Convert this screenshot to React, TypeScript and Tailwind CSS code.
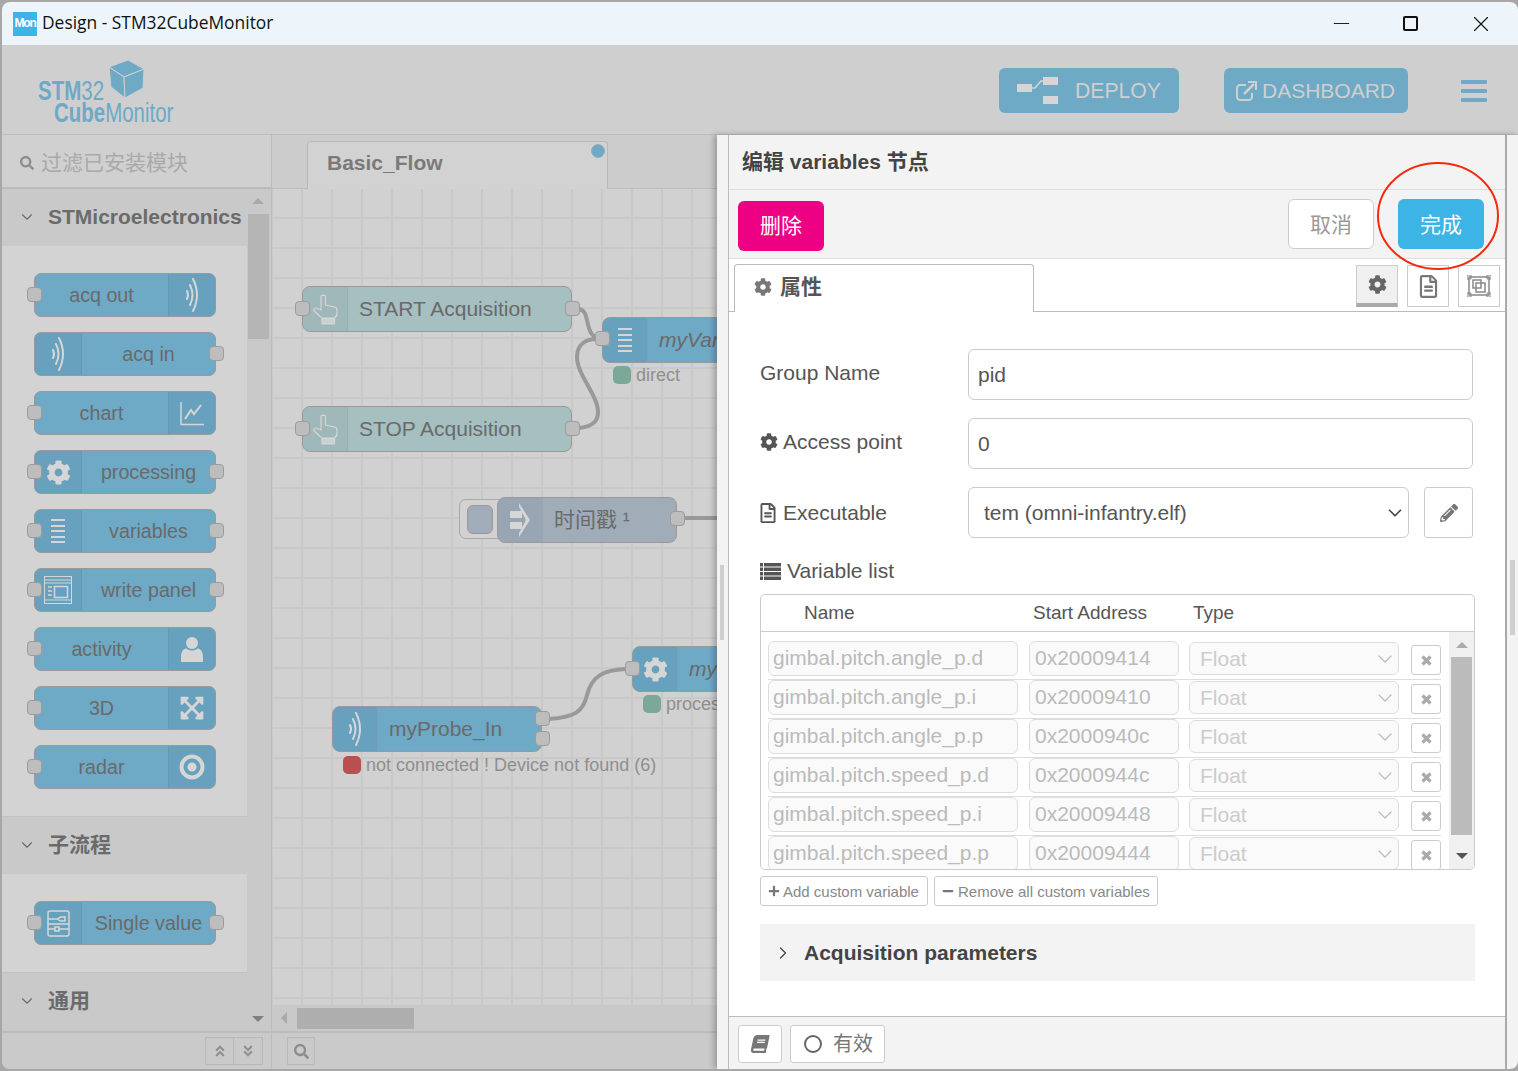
import type { ReactNode } from "react";
import {
  FaCog,
  FaExpandArrowsAlt,
  FaPencilAlt,
  FaPlus,
  FaMinus,
  FaSearch,
  FaBook,
  FaAngleDoubleUp,
  FaAngleDoubleDown,
  FaRegFileAlt,
} from "react-icons/fa";
import { ChevronDown, ChevronRight, Minus, X } from "lucide-react";

const iconCls = "text-[#d6d6d6]";

function WaveIcon() {
  return (
    <svg width="14" height="34" viewBox="0 0 14 34" fill="none" stroke="#d6d6d6" strokeWidth="2" strokeLinecap="round">
      <path d="M2 13 Q4 17 2 21" />
      <path d="M5 7 Q10 17 5 27" />
      <path d="M8 1 Q16 17 8 33" />
    </svg>
  );
}

function LinesIcon() {
  return (
    <svg width="16" height="26" viewBox="0 0 16 26" stroke="#d6d6d6" strokeWidth="2">
      <path d="M1 2H15M1 8H15M1 13H15M1 19H15M1 24H15" />
    </svg>
  );
}

function ChartIcon() {
  return (
    <svg width="26" height="25" viewBox="0 0 26 25" fill="none" stroke="#d6d6d6" strokeWidth="1.5">
      <path d="M2 1V23.5H25" />
      <path d="M6 18 L12 9 L15 13 L22 4" strokeWidth="2" />
    </svg>
  );
}

function PanelIcon() {
  return (
    <svg width="28" height="28" viewBox="0 0 28 28" fill="none" stroke="#d6d6d6" strokeWidth="1">
      <rect x="0.5" y="0.5" width="27" height="27" />
      <path d="M1 4H27M1 7H27M1 24H27" />
      <rect x="10.5" y="10.5" width="13" height="11" strokeWidth="1.5" />
      <path d="M4 11H8M4 15H8M4 19H8" strokeWidth="1.5" />
    </svg>
  );
}

function UserIcon() {
  return (
    <svg width="22" height="25" viewBox="0 0 22 25" fill="#d6d6d6">
      <circle cx="11" cy="6" r="6" />
      <path d="M0 25 V20 C0 14 3 11.5 5.5 11.5 C7 13 9 13.5 11 13.5 C13 13.5 15 13 16.5 11.5 C19 11.5 22 14 22 20 V25 Z" />
    </svg>
  );
}

function RadarIcon() {
  return (
    <svg width="26" height="26" viewBox="0 0 26 26">
      <circle cx="13" cy="13" r="10.5" fill="none" stroke="#d6d6d6" strokeWidth="4" />
      <circle cx="13" cy="13" r="4.5" fill="#d6d6d6" />
    </svg>
  );
}

function SubflowIcon() {
  return (
    <svg width="23" height="27" viewBox="0 0 23 27" fill="none" stroke="#d6d6d6" strokeWidth="1.5">
      <rect x="1" y="1" width="21" height="25" rx="2" />
      <path d="M1 9H10C12 9 12 7 14 7H18V11H14C12 11 12 9 10 9M1 14H22M1 19H8V17H12V21H8V19M12 19H22" />
    </svg>
  );
}

function HandIcon() {
  return (
    <svg width="25" height="31" viewBox="0 0 25 31" fill="none" stroke="#d6d6d6" strokeWidth="1.2" strokeLinejoin="round">
      <path d="M8 16 V3 C8 0.5 12.5 0.5 12.5 3 V11 L21.5 13 C23.5 13.5 24 14.5 24 16 V21 L21.5 24 H9 L1.5 17.5 C0 15.5 2 13 4.5 14.5 Z" />
      <path d="M9 24.5 H21.5 V30 H9 Z" fill="#d6d6d6" fillOpacity="0.8" />
    </svg>
  );
}

function TimestampIcon() {
  return (
    <svg width="20" height="36" viewBox="0 0 20 36" fill="#d6d6d6">
      <rect x="0" y="9" width="12" height="7" />
      <rect x="0" y="20" width="12" height="7" />
      <path d="M9 1 L20 18 L9 35 V31 L16 18 L9 5 Z" />
    </svg>
  );
}

function Port({ side, className = "" }: { side: "l" | "r"; className?: string }) {
  return (
    <span
      className={`absolute w-[15px] h-[15px] rounded-[4px] bg-[#bdbdbd] border border-[#9c9c9c] z-10 ${
        side === "l" ? "-left-[7px]" : "-right-[8px]"
      } ${className}`}
    />
  );
}

function PaletteNode({
  label,
  icon,
  iconRight,
  left,
  right,
}: {
  label: string;
  icon: ReactNode;
  iconRight?: boolean;
  left?: boolean;
  right?: boolean;
}) {
  const box = (
    <span
      className={`w-[47px] shrink-0 h-full flex items-center justify-center bg-[#68a1bd] border-[#639ab5] ${
        iconRight ? "border-l" : "border-r"
      }`}
    >
      {icon}
    </span>
  );
  return (
    <div className="relative w-[182px] h-[44px] ml-[32px]">
      <div className="w-full h-full rounded-[7px] border border-[#999] bg-[#6ea9c6] overflow-hidden flex items-center text-[19.7px] text-[#6a6a6a]">
        {!iconRight && box}
        <span className="flex-1 text-center leading-none whitespace-nowrap pt-[2px]">{label}</span>
        {iconRight && box}
      </div>
      {left && <Port side="l" className="top-[14px]" />}
      {right && <Port side="r" className="top-[14px]" />}
    </div>
  );
}

function SectionHeader({ title, height }: { title: string; height: string }) {
  return (
    <div className={`${height} shrink-0 flex items-center bg-[#c9c9c9] pl-[16px] pb-[2px] gap-[12px] text-[#6b6b6b] font-bold text-[21px]`}>
      <ChevronDown size={18} strokeWidth={1.5} />
      <span>{title}</span>
    </div>
  );
}

function CanvasNode({
  className,
  width,
  label,
  icon,
  color,
  iconColor,
  italic,
  ports,
}: {
  className: string;
  width: string;
  label: string;
  icon: ReactNode;
  color: string;
  iconColor: string;
  italic?: boolean;
  ports?: ReactNode;
}) {
  return (
    <div className={`absolute ${width} h-[46px] ${className}`}>
      <div className={`w-full h-full rounded-[8px] border border-[#999] ${color} overflow-hidden flex items-center text-[21px] text-[#6a6a6a]`}>
        <span className={`w-[45px] shrink-0 h-full flex items-center justify-center border-r border-[#93a9ab]/40 ${iconColor}`}>{icon}</span>
        <span className={`pl-[11px] whitespace-nowrap ${italic ? "italic" : ""}`}>{label}</span>
      </div>
      {ports}
    </div>
  );
}

function Status({ className, color, text }: { className: string; color: string; text: string }) {
  return (
    <div className={`absolute flex items-center gap-[5px] text-[18px] leading-none text-[#8f8f8f] whitespace-nowrap ${className}`}>
      <span className={`w-[18px] h-[18px] rounded-[5px] ${color}`} />
      {text}
    </div>
  );
}

const rows = [
  ["gimbal.pitch.angle_p.d", "0x20009414"],
  ["gimbal.pitch.angle_p.i", "0x20009410"],
  ["gimbal.pitch.angle_p.p", "0x2000940c"],
  ["gimbal.pitch.speed_p.d", "0x2000944c"],
  ["gimbal.pitch.speed_p.i", "0x20009448"],
  ["gimbal.pitch.speed_p.p", "0x20009444"],
];

function VarRow({ name, addr }: { name: string; addr: string }) {
  const field = "h-[35px] rounded-[6px] border border-[#ddd] bg-[#fafafa] text-[21px] text-[#bbb] flex items-center pb-[2px] shrink-0";
  return (
    <div className="h-[39px] shrink-0 border-b border-[#ddd] flex items-start mr-[8px]">
      <div className={`${field} w-[250px] pl-[4px]`}>{name}</div>
      <div className={`${field} w-[150px] ml-[11px] pl-[5px]`}>{addr}</div>
      <div className="h-[33px] mt-[1px] w-[210px] ml-[10px] rounded-[6px] border border-[#ddd] bg-[#fafafa] text-[21px] text-[#ccc] flex items-center justify-between pl-[10px] pr-[1px] shrink-0">
        Float
        <ChevronDown size={24} strokeWidth={1.2} className="text-[#bbb]" />
      </div>
      <div className="w-[30px] h-[30px] mt-[4px] ml-[12px] rounded-[3px] border border-[#ccc] bg-white flex items-center justify-center shrink-0">
        <svg width="11" height="11" viewBox="0 0 11 11" stroke="#aaa" strokeWidth="3.2">
          <path d="M1.5 1.5L9.5 9.5M9.5 1.5L1.5 9.5" />
        </svg>
      </div>
    </div>
  );
}

export default function App() {
  return (
    <div className="w-[1518px] h-[1071px] bg-[#a7a7a7] pt-[2px] pl-[2px] pb-[2px] overflow-hidden font-['Liberation_Sans','Noto_Sans_CJK_SC',sans-serif]">
      <div className="w-full h-full rounded-t-[8px] rounded-b-[8px] overflow-hidden flex flex-col relative">
        {/* Title bar */}
        <div className="h-[43px] shrink-0 bg-[#eef5fa] flex items-center pl-[11px] pr-[2px]">
          <span className="w-[24px] h-[24px] bg-[#3cb4e6] text-white font-bold text-[12px] leading-[22px] text-center tracking-[-1.2px] overflow-hidden">Mon</span>
          <span className="ml-[5px] pb-[2px] text-[17.4px] text-[#111] font-['Open_Sans',sans-serif]">Design - STM32CubeMonitor</span>
          <div className="ml-auto flex items-center text-[#111]">
            <span className="w-[70px] flex justify-center"><Minus size={25} strokeWidth={0.9} /></span>
            <span className="w-[70px] flex justify-center pr-[2px]"><span className="w-[15px] h-[15px] border-2 border-[#111] rounded-[2px]" /></span>
            <span className="w-[70px] flex justify-center"><X size={26} strokeWidth={1} /></span>
          </div>
        </div>

        {/* Header */}
        <div className="h-[90px] shrink-0 bg-[#cfcfcf] flex items-center pt-[2px] pr-[31px] border-b border-[#bdbdbd]">
          <div className="ml-[36px] mt-[0.5px] w-[140px] text-[#6ea9c6]">
            <div className="flex items-end h-[40px]">
              <span className="inline-block origin-left scale-x-[0.76] text-[27px] leading-[20px] w-[71px] whitespace-nowrap -mb-[2.5px]"><b>STM</b>32</span>
              <svg width="36" height="39" viewBox="0 0 36 39" fill="#6ea9c6" stroke="#cfcfcf" strokeWidth="1">
                <path d="M19 0L0 7L15 17L35 9Z" />
                <path d="M0 7L2 27L16 38L15 17Z" />
                <path d="M15 17L16 38L34 28L35 9Z" />
              </svg>
            </div>
            <div className="pl-[16px] mt-[4.5px] h-[20px] leading-[20px] whitespace-nowrap">
              <span className="inline-block origin-left scale-x-[0.758] text-[27px] leading-[20px]"><b>Cube</b>Monitor</span>
            </div>
          </div>
          <div className="ml-auto w-[180px] h-[45px] rounded-[6px] bg-[#6ea9c6] flex items-center pl-[18px] text-[21.2px] text-[#cfcfcf]">
            <svg width="42" height="28" viewBox="0 0 42 28" fill="#d6d6d6">
              <rect x="0" y="7" width="15" height="8" />
              <rect x="26" y="0" width="15" height="8" />
              <rect x="26" y="19" width="15" height="8" />
              <path d="M15 11 H18 L24 4 H26" fill="none" stroke="#d6d6d6" strokeWidth="1.5" />
            </svg>
            <span className="ml-[16px]">DEPLOY</span>
          </div>
          <div className="ml-[45px] w-[184px] h-[45px] rounded-[6px] bg-[#6ea9c6] flex items-center pl-[12px] gap-[5px] text-[21px] text-[#cfcfcf]">
            <svg width="21" height="20" viewBox="0 0 21 20" fill="none" stroke="#cfcfcf" strokeWidth="2">
              <path d="M10 4H4C2.5 4 1 5.5 1 7V16C1 17.5 2.5 19 4 19H13C14.5 19 16 17.5 16 16V12" />
              <path d="M8 13L18 3" strokeWidth="2.5" />
              <path d="M12 1H20V9" />
            </svg>
            <span>DASHBOARD</span>
          </div>
          <div className="ml-[53px] w-[26px] flex flex-col gap-[5px]">
            <span className="h-[4px] rounded-[1px] bg-[#6ea9c6]" />
            <span className="h-[4px] rounded-[1px] bg-[#6ea9c6]" />
            <span className="h-[4px] rounded-[1px] bg-[#6ea9c6]" />
          </div>
        </div>

        {/* Main */}
        <div className="flex-1 flex min-h-0">
          {/* Palette */}
          <div className="w-[270px] shrink-0 flex flex-col border-r border-[#bcbcbc] bg-[#d0d0d0]">
            <div className="h-[54px] shrink-0 border-b-2 border-[#bcbcbc] flex items-center pl-[18px] pt-[3px] gap-[7px] text-[21px] text-[#a9a9a9]">
              <FaSearch size={14} className="text-[#8d8d8d]" />
              <span>过滤已安装模块</span>
            </div>
            <div className="flex-1 flex min-h-0">
              <div className="w-[245px] shrink-0 flex flex-col">
                <SectionHeader title="STMicroelectronics" height="h-[57px]" />
                <div className="h-[571px] shrink-0 bg-[#d3d3d3] pt-[27px] flex flex-col gap-[15px] border-b border-[#c2c2c2]">
                  <PaletteNode label="acq out" left iconRight icon={<WaveIcon />} />
                  <PaletteNode label="acq in" right icon={<WaveIcon />} />
                  <PaletteNode label="chart" left iconRight icon={<ChartIcon />} />
                  <PaletteNode label="processing" left right icon={<FaCog size={25} className={iconCls} />} />
                  <PaletteNode label="variables" left right icon={<LinesIcon />} />
                  <PaletteNode label="write panel" left right icon={<PanelIcon />} />
                  <PaletteNode label="activity" left iconRight icon={<UserIcon />} />
                  <PaletteNode label="3D" left iconRight icon={<FaExpandArrowsAlt size={26} className={iconCls} />} />
                  <PaletteNode label="radar" left iconRight icon={<RadarIcon />} />
                </div>
                <SectionHeader title="子流程" height="h-[57px]" />
                <div className="h-[99px] shrink-0 bg-[#d3d3d3] pt-[27px] border-b border-[#c2c2c2]">
                  <PaletteNode label="Single value" left right icon={<SubflowIcon />} />
                </div>
                <SectionHeader title="通用" height="h-[58px]" />
              </div>
              <div className="flex-1 bg-[#c9c9c9] flex flex-col items-center pt-[9px] pr-[2px]">
                <span className="w-0 h-0 border-x-[6px] border-x-transparent border-b-[6px] border-b-[#aaa]" />
                <span className="w-[21px] h-[125px] mt-[10px] bg-[#b4b4b4]" />
                <span className="w-0 h-0 mt-auto mb-[9px] border-x-[6px] border-x-transparent border-t-[6px] border-t-[#808080]" />
              </div>
            </div>
            <div className="h-[38px] shrink-0 border-t-2 border-[#bcbcbc] flex justify-end items-start pt-[4px] pr-[8px] bg-[#cacaca]">
              <span className="w-[29px] h-[28px] border border-[#b8b8b8] flex items-center justify-center"><FaAngleDoubleUp size={14} className="text-[#8f8f8f]" /></span>
              <span className="w-[29px] h-[28px] border border-l-0 border-[#b8b8b8] flex items-center justify-center"><FaAngleDoubleDown size={14} className="text-[#8f8f8f]" /></span>
            </div>
          </div>

          {/* Workspace */}
          <div className="w-[445px] shrink-0 flex flex-col min-w-0">
            <div className="h-[54px] shrink-0 bg-[#cccccc] border-b border-[#bcbcbc] pl-[35px] pt-[6px]">
              <div className="relative w-[301px] h-[48px] bg-[#d2d2d2] border border-b-0 border-[#b8b8b8] rounded-t-[4px] flex items-center pl-[19px] pb-[6px] text-[21px] font-bold text-[#7a7a7a]">
                Basic_Flow
                <span className="absolute right-[2px] top-[2px] w-[14px] h-[14px] rounded-full bg-[#6ea9c6] border border-[#9ab]" />
              </div>
            </div>
            <div className="relative h-[816px] shrink-0 overflow-hidden bg-[#d1d1d1] bg-[linear-gradient(#c9c9c9_2px,transparent_2px),linear-gradient(90deg,#c9c9c9_2px,transparent_2px)] bg-[size:30px_30px] bg-[position:-1px_-2px]">
              <svg className="absolute inset-0" width="445" height="816" viewBox="272 189 445 816" fill="none" stroke="#999" strokeWidth="4">
                <path d="M578 309 C592 309 582 335 600 339" />
                <path d="M580 428 C592 426 598 422 598 412 C598 395 577 375 577 357 C577 345 585 339 597 339" />
                <path d="M549 719 C575 717 583 712 587 695 C592 675 605 670 625 669" />
                <path d="M684 518 H717" />
              </svg>

              <CanvasNode
                className="left-[30px] top-[97px]"
                width="w-[270px]"
                label="START Acquisition"
                color="bg-[#a6bfc1]"
                iconColor="bg-[#9fb8ba]"
                icon={<HandIcon />}
                ports={<><Port side="l" className="top-[15px]" /><Port side="r" className="top-[15px]" /></>}
              />
              <CanvasNode
                className="left-[30px] top-[217px]"
                width="w-[270px]"
                label="STOP Acquisition"
                color="bg-[#a6bfc1]"
                iconColor="bg-[#9fb8ba]"
                icon={<HandIcon />}
                ports={<><Port side="l" className="top-[15px]" /><Port side="r" className="top-[15px]" /></>}
              />
              <CanvasNode
                className="left-[330px] top-[128px]"
                width="w-[200px]"
                label="myVariables"
                italic
                color="bg-[#6ea9c6]"
                iconColor="bg-[#68a1bd]"
                icon={<LinesIcon />}
                ports={<Port side="l" className="top-[14px]" />}
              />
              <Status className="left-[341px] top-[177px]" color="bg-[#7ba897]" text="direct" />

              <div className="absolute left-[187px] top-[310px] w-[50px] h-[40px] rounded-[7px] border border-[#a9a9a9] bg-[#d2d2d2] pl-[7px] pt-[5px]">
                <div className="w-[26px] h-[29px] rounded-[6px] border border-[#999] bg-[#a0adb9]" />
              </div>
              <CanvasNode
                className="left-[225px] top-[308px]"
                width="w-[180px]"
                label="时间戳 ¹"
                color="bg-[#a0adb9]"
                iconColor="bg-[#98a5b3]"
                icon={<TimestampIcon />}
                ports={<Port side="r" className="top-[14px]" />}
              />

              <CanvasNode
                className="left-[360px] top-[457px]"
                width="w-[200px]"
                label="myProcessing"
                italic
                color="bg-[#6ea9c6]"
                iconColor="bg-[#68a1bd]"
                icon={<FaCog size={25} className={iconCls} />}
                ports={<Port side="l" className="top-[15px]" />}
              />
              <Status className="left-[371px] top-[506px]" color="bg-[#7ba897]" text="processing" />

              <CanvasNode
                className="left-[60px] top-[517px]"
                width="w-[210px]"
                label="myProbe_In"
                color="bg-[#6ea9c6]"
                iconColor="bg-[#68a1bd]"
                icon={<WaveIcon />}
                ports={<><Port side="r" className="top-[5px]" /><Port side="r" className="top-[25px]" /></>}
              />
              <Status className="left-[71px] top-[567px]" color="bg-[#b85050]" text="not connected ! Device not found (6)" />
            </div>
            <div className="h-[26px] shrink-0 bg-[#c9c9c9] flex items-center pl-[9px]">
              <span className="w-0 h-0 border-y-[6px] border-y-transparent border-r-[6px] border-r-[#aaa]" />
              <span className="ml-[10px] w-[117px] h-[21px] bg-[#aeaeae]" />
            </div>
            <div className="flex-1 border-t-2 border-[#bcbcbc] bg-[#cacaca] pl-[15px] pt-[4px]">
              <span className="w-[28px] h-[28px] border border-[#b8b8b8] flex items-center justify-center"><FaSearch size={15} className="text-[#8d8d8d]" /></span>
            </div>
          </div>

          {/* Edit tray */}
          <div className="flex-1 flex min-w-0 relative z-10 shadow-[-3px_0_6px_rgba(0,0,0,0.25)] bg-[#f3f3f3]">
            <div className="w-[12px] shrink-0 border-r border-[#bbb] pl-[3px] pt-[430px]">
              <div className="w-[4px] h-[75px] bg-[#cfcfcf]" />
            </div>
            <div className="w-[778px] shrink-0 flex flex-col bg-white border-r-2 border-[#aaa] relative">
              <div className="h-[55px] shrink-0 bg-[#f3f3f3] border-b border-[#ddd] flex items-center pl-[13px] text-[21px] font-bold text-[#444]">编辑 variables 节点</div>
              <div className="h-[69px] shrink-0 bg-[#f3f3f3] border-b border-[#ddd] flex items-start pl-[9px] pr-[21px] text-[21px]">
                <div className="w-[86px] h-[50px] mt-[11px] rounded-[6px] bg-[#ee0084] text-white flex items-center justify-center">删除</div>
                <div className="ml-auto w-[86px] h-[50px] mt-[9px] pt-[2px] rounded-[6px] border border-[#ccc] bg-white text-[#999] flex items-center justify-center">取消</div>
                <div className="ml-[24px] w-[86px] h-[50px] mt-[9px] pt-[2px] rounded-[6px] bg-[#3cb4e6] text-white flex items-center justify-center">完成</div>
              </div>
              <div className="h-[53px] shrink-0 border-b border-[#bbb] flex pl-[5px] pt-[5px] pr-[5px]">
                <div className="w-[300px] h-[48px] bg-white border border-b-0 border-[#bbb] rounded-t-[4px] -mb-px flex items-center pl-[19px] pb-[3px] gap-[8px] text-[21px] font-bold text-[#555]">
                  <FaCog size={18} className="text-[#777]" />
                  属性
                </div>
                <div className="ml-auto flex gap-[9px] pt-px">
                  <div className="w-[42px] h-[42px] bg-[#f0f0f0] border border-[#ccc] border-b-[4px] border-b-[#aaa] flex items-center justify-center"><FaCog size={19} className="text-[#666]" /></div>
                  <div className="w-[42px] h-[42px] border border-[#ccc] flex items-center justify-center"><FaRegFileAlt size={23} className="text-[#777]" /></div>
                  <div className="w-[42px] h-[42px] border border-[#ccc] flex items-center justify-center">
                    <svg width="24" height="22" viewBox="0 0 24 22" fill="none" stroke="#888" strokeWidth="1.5">
                      <rect x="2" y="2" width="20" height="18" />
                      <rect x="6" y="5" width="8" height="8" />
                      <rect x="9" y="8" width="9" height="9" />
                      <path d="M0 0h4v4h-4zM20 0h4v4h-4zM0 18h4v4h-4zM20 18h4v4h-4z" strokeWidth="1" />
                    </svg>
                  </div>
                </div>
              </div>

              <div className="flex-1 min-h-0 pl-[31px] pr-[31px] pt-[37px] text-[21px] text-[#555]">
                <div className="flex items-center h-[51px]">
                  <div className="w-[208px] pb-[4px]">Group Name</div>
                  <div className="w-[505px] h-[51px] rounded-[6px] border border-[#ccc] flex items-center pl-[9px]">pid</div>
                </div>
                <div className="flex items-center h-[51px] mt-[18px]">
                  <div className="w-[208px] pb-[4px] flex items-center gap-[5px]"><FaCog size={18} />Access point</div>
                  <div className="w-[505px] h-[51px] rounded-[6px] border border-[#ccc] flex items-center pl-[9px]">0</div>
                </div>
                <div className="flex items-center h-[51px] mt-[18px]">
                  <div className="w-[208px] flex items-center gap-[5px]"><FaRegFileAlt size={20} className="-ml-[2px]" />Executable</div>
                  <div className="w-[441px] h-[51px] rounded-[6px] border border-[#ccc] flex items-center justify-between pl-[15px] pr-[2px]">
                    tem (omni-infantry.elf)
                    <ChevronDown size={22} strokeWidth={1.8} className="text-[#444]" />
                  </div>
                  <div className="ml-[15px] w-[49px] h-[51px] rounded-[3px] border border-[#ccc] flex items-center justify-center"><FaPencilAlt size={18} className="text-[#777]" /></div>
                </div>
                <div className="flex items-center gap-[6px] mt-[19px] h-[28px]">
                  <svg width="21" height="17" viewBox="0 0 21 17" fill="#555">
                    <path d="M0 0h3v3.5H0zM4 0h17v3.5H4zM0 4.5h3V8H0zM4 4.5h17V8H4zM0 9h3v3.5H0zM4 9h17v3.5H4zM0 13.5h3V17H0zM4 13.5h17V17H4z" />
                  </svg>
                  Variable list
                </div>

                <div className="mt-[9px] w-[715px] h-[276px] rounded-[5px] border border-[#ccc] overflow-hidden flex flex-col">
                  <div className="h-[37px] shrink-0 border-b border-[#ccc] flex items-center pl-[43px] text-[19px]">
                    <span className="w-[229px]">Name</span>
                    <span className="w-[160px]">Start Address</span>
                    <span>Type</span>
                  </div>
                  <div className="flex-1 min-h-0 flex">
                    <div className="flex-1 min-w-0 pl-[7px] pt-[9px] overflow-hidden flex flex-col">
                      {rows.map((r) => (
                        <VarRow key={r[0]} name={r[0]} addr={r[1]} />
                      ))}
                    </div>
                    <div className="w-[25px] shrink-0 bg-[#f0f0f0] flex flex-col items-center pt-[10px]">
                      <span className="w-0 h-0 border-x-[6px] border-x-transparent border-b-[6px] border-b-[#aaa]" />
                      <span className="w-[21px] h-[178px] mt-[9px] bg-[#bbb]" />
                      <span className="w-0 h-0 mt-auto mb-[10px] border-x-[6px] border-x-transparent border-t-[6px] border-t-[#555]" />
                    </div>
                  </div>
                </div>

                <div className="flex gap-[6px] mt-[6px] text-[15px] text-[#888]">
                  <div className="h-[30px] w-[168px] rounded-[3px] border border-[#ccc] flex items-center pl-[7px] pt-[2px] gap-[3px]"><FaPlus size={12} className="text-[#777] -mt-[2px]" />Add custom variable</div>
                  <div className="h-[30px] w-[224px] rounded-[3px] border border-[#ccc] flex items-center pl-[7px] pt-[2px] gap-[4px]"><FaMinus size={12} className="text-[#777] -mt-[2px]" />Remove all custom variables</div>
                </div>
                <div className="mt-[18px] w-[715px] h-[57px] bg-[#f3f3f3] flex items-center pl-[13px] gap-[11px] font-bold text-[#444] text-[21px]">
                  <ChevronRight size={20} strokeWidth={1.5} />
                  Acquisition parameters
                </div>
              </div>

              <div className="h-[53px] shrink-0 bg-[#f3f3f3] border-t border-[#bbb] flex items-start pl-[9px] pt-[8px] gap-[8px]">
                <div className="w-[44px] h-[38px] rounded-[3px] border border-[#ccc] bg-white flex items-center justify-center"><FaBook size={18} className="text-[#777] -skew-x-12" /></div>
                <div className="w-[95px] h-[38px] rounded-[3px] border border-[#ccc] bg-white flex items-center pl-[13px] gap-[11px] text-[20px] text-[#777]">
                  <span className="w-[18px] h-[18px] rounded-full border-2 border-[#666]" />
                  有效
                </div>
              </div>
            </div>
            <div className="flex-1 pl-[3px] pt-[425px]">
              <div className="w-[5px] h-[75px] bg-[#cfcfcf]" />
            </div>
          </div>
        </div>

        {/* Red highlight around the confirm button */}
        <svg className="absolute left-[1373px] top-[159px] z-20" width="126" height="110" viewBox="0 0 126 110" fill="none" stroke="#f52a0a" strokeWidth="2">
          <ellipse cx="63" cy="55" rx="60" ry="53" />
        </svg>
      </div>
    </div>
  );
}
